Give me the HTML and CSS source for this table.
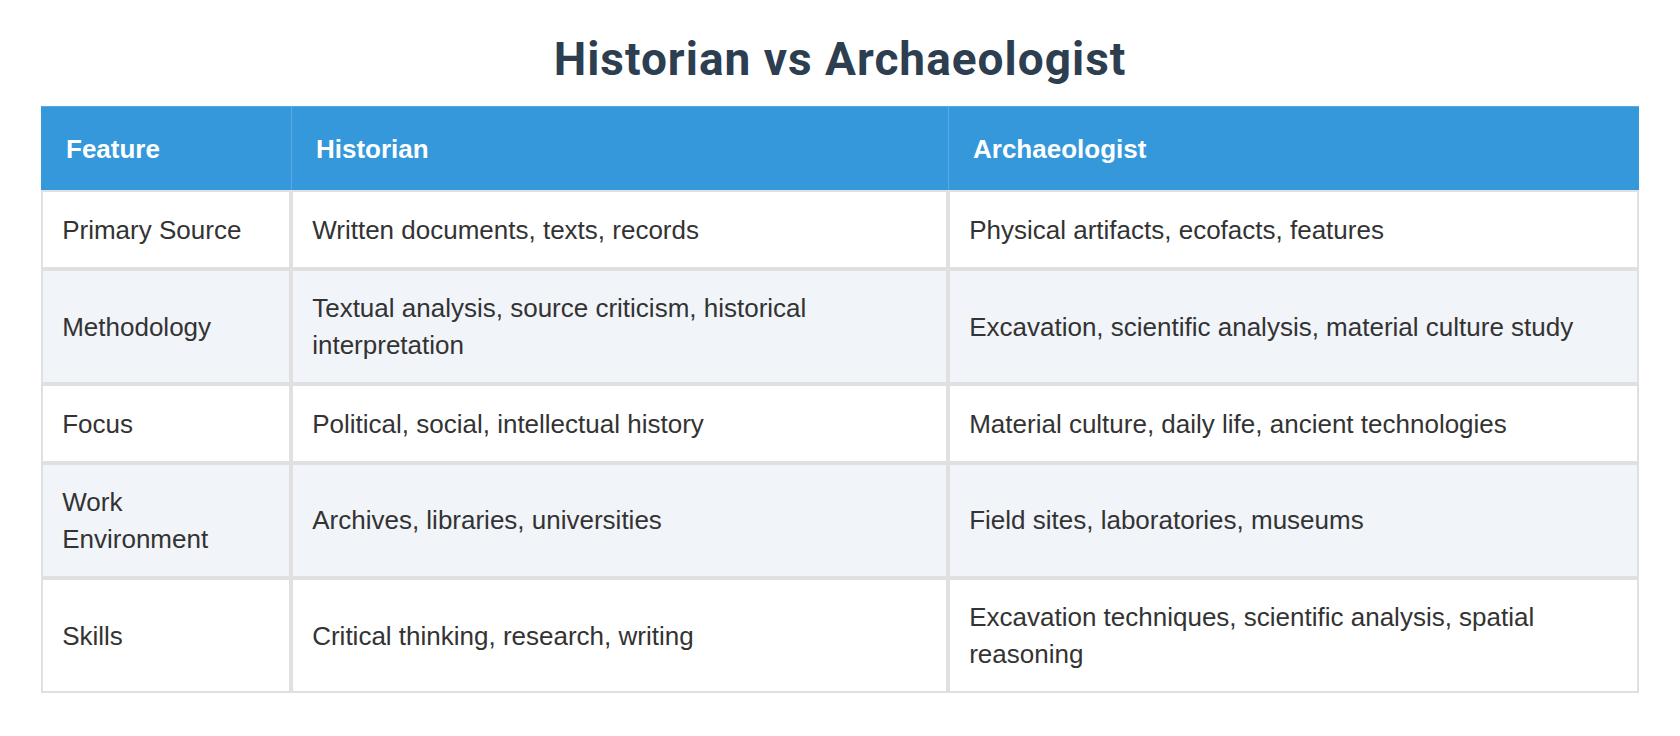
FILE: index.html
```html
<!DOCTYPE html>
<html lang="en">
<head>
<meta charset="utf-8">
<title>Historian vs Archaeologist</title>
<link rel="stylesheet" href="styles.css">
</head>
<body>
<div class="page">
  <h1 class="title">Historian vs Archaeologist</h1>
  <table class="compare">
    <colgroup>
      <col class="c1">
      <col class="c2">
      <col class="c3">
    </colgroup>
    <thead>
      <tr>
        <th>Feature</th>
        <th>Historian</th>
        <th>Archaeologist</th>
      </tr>
    </thead>
    <tbody>
      <tr>
        <td>Primary Source</td>
        <td>Written documents, texts, records</td>
        <td>Physical artifacts, ecofacts, features</td>
      </tr>
      <tr class="alt">
        <td>Methodology</td>
        <td>Textual analysis, source criticism, historical interpretation</td>
        <td>Excavation, scientific analysis, material culture study</td>
      </tr>
      <tr>
        <td>Focus</td>
        <td>Political, social, intellectual history</td>
        <td>Material culture, daily life, ancient technologies</td>
      </tr>
      <tr class="alt">
        <td>Work Environment</td>
        <td>Archives, libraries, universities</td>
        <td>Field sites, laboratories, museums</td>
      </tr>
      <tr>
        <td>Skills</td>
        <td>Critical thinking, research, writing</td>
        <td>Excavation techniques, scientific analysis, spatial reasoning</td>
      </tr>
    </tbody>
  </table>
</div>
</body>
</html>
```

FILE: styles.css
```css
html, body {
  margin: 0;
  padding: 0;
  background: #ffffff;
}

.page {
  padding: 0 41px;
  font-family: "Liberation Sans", Arial, sans-serif;
  color: #333333;
}

.title {
  margin: 33px 0 20px;
  font-family: Roboto, "Liberation Sans", sans-serif;
  font-weight: 700;
  font-size: 46px;
  letter-spacing: 1px;
  line-height: 53px;
  text-align: center;
  color: #2c3e50;
}

.compare {
  width: 1598px;
  table-layout: fixed;
  border-collapse: separate;
  border-spacing: 0;
  font-size: 26px;
  line-height: 1.4;
}

.c1 { width: 250px; }
.c2 { width: 657px; }
.c3 { width: 691px; }

.compare th {
  background: #3498db;
  color: #ffffff;
  font-weight: 700;
  text-align: left;
  padding: 23.5px 24px;
  border-top: 1px solid #5aaae2;
  border-left: 1px solid #5aaae2;
}

.compare th:first-child {
  border-left: 1px solid #3498db;
}

.compare td {
  padding: 19.2px;
  border: 2px solid #e0e0e0;
  background: #ffffff;
  vertical-align: middle;
}

.compare tr.alt td {
  background: #f1f4f9;
}
```
